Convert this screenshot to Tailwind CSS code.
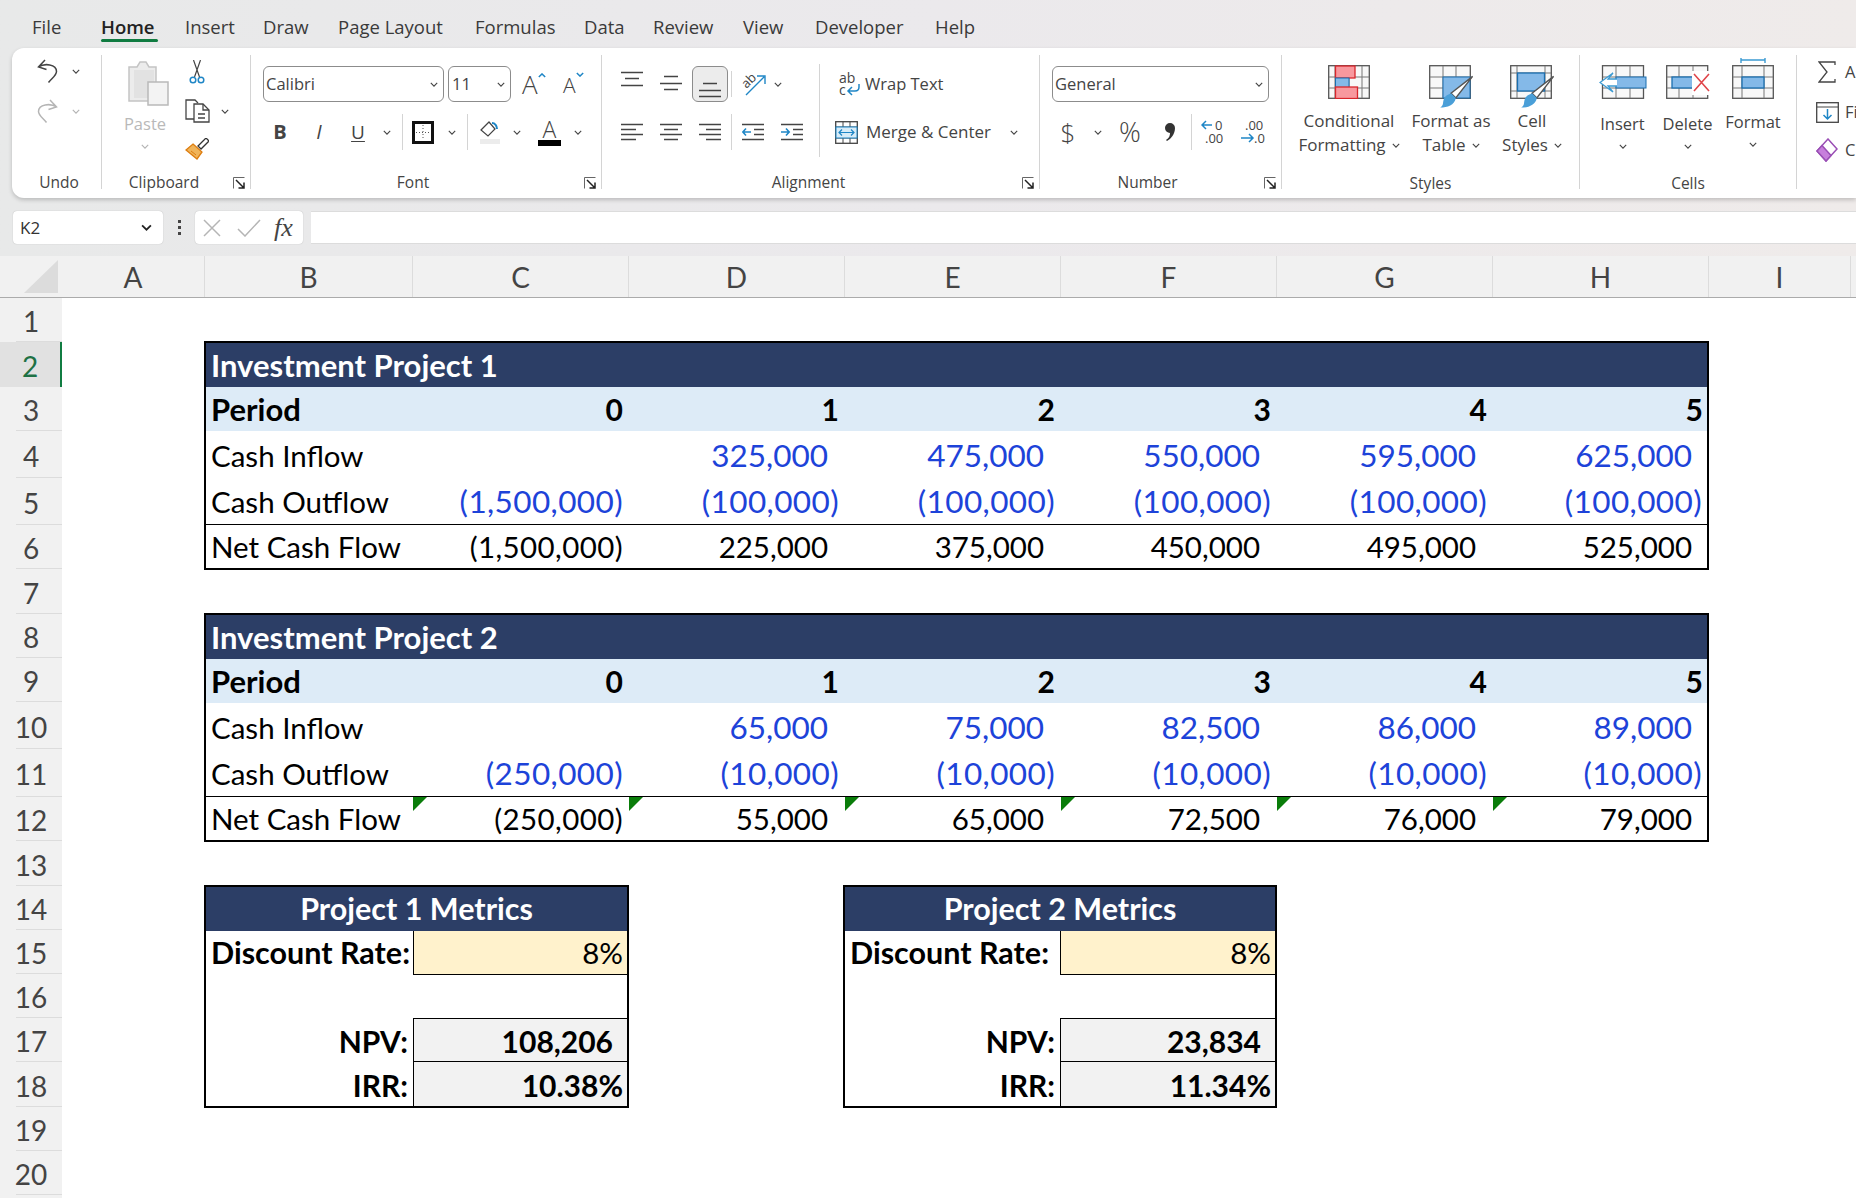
<!DOCTYPE html>
<html lang="en">
<head>
  <meta charset="UTF-8">
  <title>Excel - Investment Projects</title>
  <script src="https://cdn.jsdelivr.net/npm/@tailwindcss/browser@4"></script>
</head>
<body class="w-[1856px] h-[1198px] overflow-hidden bg-white font-['Open_Sans',sans-serif] text-[#333]">

  <svg class="hidden">
    <symbol id="chev" viewBox="0 0 10 6"><path d="M1 1l4 4 4-4" fill="none" stroke="#444" stroke-width="1.4"/></symbol>
    <symbol id="chevblue" viewBox="0 0 10 6"><path d="M1 1l4 4 4-4" fill="none" stroke="#1f86c6" stroke-width="1.8"/></symbol>
    <symbol id="launcher" viewBox="0 0 12 12"><path d="M.5 11.5V.5h11" fill="none" stroke="#666"/><path d="M3 3l8 8M11 5.5V11H5.5" fill="none" stroke="#222" stroke-width="1.5"/></symbol>
    <symbol id="brush" viewBox="0 0 30 30"><path d="M28 2L14 20l-4-4z" fill="#fff" stroke="#555" stroke-width="1.2"/><path d="M10 16l4 4c-1 6-7 8-13 8 3-2 2-4 3-7 1-3 4-4 6-5z" fill="#4a9fd8"/></symbol>
  </svg>

  <!-- top chrome -->
  <div class="h-[256px] bg-linear-to-r from-[#e8e9e9] via-[#ebe9ec] to-[#efebea]">
    <div class="h-[48px] flex items-end pb-[9px] pl-[32px] text-[18.5px] leading-[24px] text-[#3a3a3a]">
      <div class="w-[69px]">File</div>
      <div class="w-[84px] relative font-semibold text-[#222]">Home<div class="absolute left-0 top-[24px] w-[57px] h-[3px] rounded-full bg-[#107c41]"></div></div>
      <div class="w-[78px]">Insert</div>
      <div class="w-[75px]">Draw</div>
      <div class="w-[137px]">Page Layout</div>
      <div class="w-[109px]">Formulas</div>
      <div class="w-[69px]">Data</div>
      <div class="w-[90px]">Review</div>
      <div class="w-[72px]">View</div>
      <div class="w-[120px]">Developer</div>
      <div>Help</div>
    </div>

    <!-- ribbon -->
    <div class="ml-[12px] h-[150px] flex bg-white rounded-l-[12px] shadow-[0_2px_4px_rgba(0,0,0,0.2)] text-[16.5px] text-[#444] overflow-hidden">

      <!-- Undo -->
      <div class="w-[89px] shrink-0 flex flex-col pt-[11px]">
        <div class="flex items-center h-[24px] pl-[25px]">
          <svg class="w-[21px] h-[24px]" viewBox="0 0 21 24" fill="none" stroke="#444" stroke-width="1.5"><path d="M8 1L1.5 8l8 2.5M1.5 8c6-4 18-3 18 4.500 0 4-5 7-8 11"/></svg>
          <svg class="w-[8px] h-[5px] ml-[14px]"><use href="#chev"/></svg>
        </div>
        <div class="flex items-center h-[24px] pl-[25px] mt-[16px]">
          <svg class="w-[21px] h-[24px]" viewBox="0 0 21 24" fill="none" stroke="#b5b5b5" stroke-width="1.5"><path d="M13 1l6.500 7-8 2.500M19.500 8c-6-4-18-3-18 4.500 0 4 5 7 8 11"/></svg>
          <svg class="w-[8px] h-[5px] ml-[14px] opacity-40"><use href="#chev"/></svg>
        </div>
        <div class="mt-auto mb-[6px] h-[20px] leading-[20px] pl-[5px] text-center text-[15.5px]">Undo</div>
      </div>
      <div class="w-px h-[134px] shrink-0 mt-[7px] bg-[#d4d4d4]"></div>

      <!-- Clipboard -->
      <div class="w-[148px] shrink-0 relative flex flex-col">
        <div class="flex">
          <div class="w-[50px] ml-[18px] flex flex-col items-center pt-[13px]">
            <svg class="w-[41px] h-[45px] ml-[7px] shrink-0" viewBox="0 0 41 45">
              <path d="M1 6h8l3-5h6l3 5h7v34H1z" fill="#ececec" stroke="#c4c4c4" stroke-width="1.5"/>
              <rect x="6" y="9" width="20" height="28" fill="#e2e2e2"/>
              <rect x="20" y="21" width="20" height="23" fill="#f3f3f3" stroke="#b9b9b9" stroke-width="1.500"/>
            </svg>
            <div class="mt-[7px] leading-[22px] text-[#b9b9b9]">Paste</div>
            <svg class="w-[8px] h-[5px] mt-[9px] opacity-40"><use href="#chev"/></svg>
          </div>
          <div class="ml-[15px] pt-[12px] flex flex-col">
            <svg class="w-[16px] h-[24px] ml-[4px]" viewBox="0 0 16 24" fill="none"><path d="M4.500 0l6 17M11.500 0l-6 17" stroke="#444" stroke-width="1.200"/><circle cx="4" cy="20" r="2.800" stroke="#1f86c6" stroke-width="1.500"/><circle cx="12" cy="20" r="2.800" stroke="#1f86c6" stroke-width="1.500"/></svg>
            <div class="flex items-center mt-[15px] h-[24px]">
              <svg class="w-[25px] h-[24px]" viewBox="0 0 25 24" fill="none" stroke="#444" stroke-width="1.300"><path d="M10 20H1V1h9l3 3"/><path d="M9 5h9l6 6v12H9z" fill="#fff"/><path d="M18 5v6h6M13 15h7M13 19h7"/></svg>
              <svg class="w-[8px] h-[5px] ml-[11px]"><use href="#chev"/></svg>
            </div>
            <svg class="w-[24px] h-[22px] mt-[15px]" viewBox="0 0 24 22"><path d="M13 8l8-8 3 3-8 8z" fill="#fff" stroke="#333" stroke-width="1.300"/><path d="M8 6l9 8-5 7L1 12z" fill="#f0b45a" stroke="#dd7d10" stroke-width="1.300"/><path d="M6 13l5 4" stroke="#dd7d10"/></svg>
          </div>
        </div>
        <div class="mt-auto mb-[6px] h-[20px] leading-[20px] pr-[24px] text-center text-[15.5px]">Clipboard</div>
        <svg class="absolute right-[5px] bottom-[9px] w-[12px] h-[12px]"><use href="#launcher"/></svg>
      </div>
      <div class="w-px h-[134px] shrink-0 mt-[7px] bg-[#d4d4d4]"></div>

      <!-- Font -->
      <div class="w-[350px] shrink-0 relative flex flex-col pt-[18px]">
        <div class="flex items-center h-[36px] pl-[12px]">
          <div class="w-[181px] h-[36px] px-[2px] pr-[5px] flex items-center justify-between border border-[#8c8c8c] rounded-[6px]">Calibri<svg class="w-[8px] h-[5px]"><use href="#chev"/></svg></div>
          <div class="w-[63px] h-[36px] ml-[4px] px-[3px] pr-[5px] flex items-center justify-between border border-[#8c8c8c] rounded-[6px]">11<svg class="w-[8px] h-[5px]"><use href="#chev"/></svg></div>
          <div class="w-[23px] ml-[11px] flex items-start text-[26px] font-light leading-[30px]">A<svg class="w-[8px] h-[5px] mt-[4px] shrink-0 -rotate-180"><use href="#chevblue"/></svg></div>
          <div class="w-[23px] ml-[18px] flex items-start text-[21px] font-light leading-[30px] pt-[1px]">A<svg class="w-[8px] h-[5px] mt-[2px] shrink-0"><use href="#chevblue"/></svg></div>
        </div>
        <div class="flex items-center h-[36px] mt-[12px] pl-[12px]">
          <div class="w-[34px] text-center font-bold text-[20px]">B</div>
          <div class="w-[44px] text-center italic text-[20px]">I</div>
          <div class="w-[34px] text-center underline underline-offset-2 text-[19px]">U</div>
          <svg class="w-[8px] h-[5px] ml-[8px]"><use href="#chev"/></svg>
          <div class="w-px h-[36px] ml-[11px] bg-[#d4d4d4]"></div>
          <svg class="w-[22px] h-[23px] ml-[9px]" viewBox="0 0 22 23"><rect x="1.500" y="1.500" width="19" height="20" fill="none" stroke="#111" stroke-width="3"/><path d="M11 4v15M4 11.500h14" stroke="#555" stroke-dasharray="1 2"/></svg>
          <svg class="w-[8px] h-[5px] ml-[14px]"><use href="#chev"/></svg>
          <div class="w-px h-[36px] ml-[11px] bg-[#d4d4d4]"></div>
          <svg class="w-[20px] h-[24px] ml-[12px]" viewBox="0 0 20 24"><path d="M1 10l8-8 6 7-7 7z" fill="#fff" stroke="#444" stroke-width="1.200"/><path d="M12 3c3 0 5 3 5 6" fill="none" stroke="#1f86c6" stroke-width="2"/><rect x="0" y="19" width="20" height="5" fill="#ececec"/></svg>
          <svg class="w-[8px] h-[5px] ml-[13px]"><use href="#chev"/></svg>
          <div class="w-[23px] ml-[17px] flex flex-col items-center text-[23px] font-light leading-[20px]">A<div class="w-[23px] h-[6px] mt-[1px] bg-black"></div></div>
          <svg class="w-[8px] h-[5px] ml-[13px]"><use href="#chev"/></svg>
        </div>
        <div class="mt-auto mb-[6px] h-[20px] leading-[20px] pr-[26px] text-center text-[15.5px]">Font</div>
        <svg class="absolute right-[5px] bottom-[9px] w-[12px] h-[12px]"><use href="#launcher"/></svg>
      </div>
      <div class="w-px h-[134px] shrink-0 mt-[7px] bg-[#d4d4d4]"></div>

      <!-- Alignment -->
      <div class="w-[437px] shrink-0 relative flex flex-col pt-[16px]">
        <div class="flex">
          <div class="w-[217px] shrink-0 pt-[2px] flex flex-col">
            <div class="flex items-center h-[36px]">
              <svg class="w-[22px] h-[36px] ml-[19px]" viewBox="0 0 22 36" stroke="#444" stroke-width="1.300"><path d="M0 6.500h22M4 12.500h14M0 19.500h22"/></svg>
              <svg class="w-[22px] h-[36px] ml-[17px]" viewBox="0 0 22 36" stroke="#444" stroke-width="1.300"><path d="M4 10.500h14M0 17.500h22M4 23.500h14"/></svg>
              <div class="w-[36px] h-[36px] ml-[10px] flex items-center justify-center bg-[#ececec] border border-[#8c8c8c] rounded-[6px]">
                <svg class="w-[22px] h-[34px]" viewBox="0 0 22 34" stroke="#444" stroke-width="1.300"><path d="M4 16.500h14M0 23.500h22M0 29.500h22"/></svg>
              </div>
              <div class="w-px h-[26px] ml-[3px] bg-[#d4d4d4]"></div>
              <div class="relative w-[25px] h-[23px] ml-[9px]">
                <span class="absolute left-[0px] top-[1px] -rotate-45 text-[13px] leading-[13px]">ab</span>
                <svg class="absolute left-0 top-0 w-[25px] h-[23px]" viewBox="0 0 25 23"><path d="M5 22L23 4M16 3h8v8" fill="none" stroke="#1f86c6" stroke-width="1.400"/></svg>
              </div>
              <svg class="w-[8px] h-[5px] ml-[8px]"><use href="#chev"/></svg>
            </div>
            <div class="flex items-center h-[36px] mt-[12px]">
              <svg class="w-[22px] h-[20px] ml-[19px]" viewBox="0 0 22 20" stroke="#444" stroke-width="1.300"><path d="M0 2.500h22M0 7.500h15M0 12.500h22M0 17.500h15"/></svg>
              <svg class="w-[22px] h-[20px] ml-[17px]" viewBox="0 0 22 20" stroke="#444" stroke-width="1.300"><path d="M0 2.500h22M4 7.500h14M0 12.500h22M4 17.500h14"/></svg>
              <svg class="w-[22px] h-[20px] ml-[17px]" viewBox="0 0 22 20" stroke="#444" stroke-width="1.300"><path d="M0 2.500h22M7 7.500h15M0 12.500h22M7 17.500h15"/></svg>
              <div class="w-px h-[36px] ml-[10px] bg-[#d4d4d4]"></div>
              <svg class="w-[22px] h-[20px] ml-[10px]" viewBox="0 0 22 20" fill="none"><path d="M0 2.500h22M12 7.500h10M12 12.500h10M0 17.500h22" stroke="#444" stroke-width="1.300"/><path d="M9 10H1M4 6.500L.800 10 4 13.500" stroke="#1f86c6" stroke-width="1.600"/></svg>
              <svg class="w-[22px] h-[20px] ml-[17px]" viewBox="0 0 22 20" fill="none"><path d="M0 2.500h22M12 7.500h10M12 12.500h10M0 17.500h22" stroke="#444" stroke-width="1.300"/><path d="M0 10h8M5 6.500L8.200 10 5 13.500" stroke="#1f86c6" stroke-width="1.600"/></svg>
            </div>
          </div>
          <div class="w-px h-[93px] shrink-0 bg-[#d4d4d4]"></div>
          <div class="flex-1 pt-[2px] flex flex-col">
            <div class="flex items-center h-[36px] pl-[19px]">
              <div class="relative w-[21px] h-[24px] text-[14px] leading-[12px]">
                <div>ab</div><div>c</div>
                <svg class="absolute left-0 top-0 w-[21px] h-[24px]" viewBox="0 0 21 24"><path d="M20 12v3c0 3-2 4-4 4H9M13 15l-4 4 4 4" fill="none" stroke="#1f86c6" stroke-width="1.500"/></svg>
              </div>
              <span class="ml-[5px]">Wrap Text</span>
            </div>
            <div class="flex items-center h-[36px] mt-[12px] pl-[15px]">
              <svg class="w-[23px] h-[23px]" viewBox="0 0 23 23" fill="none"><rect x=".7" y=".7" width="21.600" height="21.600" stroke="#444" stroke-width="1.300"/><path d="M.7 6h21.600M.7 17h21.600M8 .7V6M15 .7V6M8 17v5.500M15 17v5.500" stroke="#444"/><rect x="1" y="6" width="21" height="11" fill="#d8ecf8" stroke="#1f86c6"/><path d="M4 11.500h15M7 8.500l-3 3 3 3M16 8.500l3 3-3 3" stroke="#1f86c6" stroke-width="1.200"/></svg>
              <span class="ml-[8px] w-[144px] text-[17px]">Merge &amp; Center</span>
              <svg class="w-[8px] h-[5px]"><use href="#chev"/></svg>
            </div>
          </div>
        </div>
        <div class="mt-auto mb-[6px] h-[20px] leading-[20px] pr-[24px] text-center text-[15.5px]">Alignment</div>
        <svg class="absolute right-[5px] bottom-[9px] w-[12px] h-[12px]"><use href="#launcher"/></svg>
      </div>
      <div class="w-px h-[134px] shrink-0 mt-[7px] bg-[#d4d4d4]"></div>

      <!-- Number -->
      <div class="w-[241px] shrink-0 relative flex flex-col pt-[18px]">
        <div class="w-[217px] h-[36px] ml-[12px] px-[2px] pr-[5px] flex items-center justify-between border border-[#8c8c8c] rounded-[6px]">General<svg class="w-[8px] h-[5px]"><use href="#chev"/></svg></div>
        <div class="flex items-center h-[36px] mt-[12px]">
          <div class="w-[16px] ml-[20px] text-center text-[26px] font-light">$</div>
          <svg class="w-[8px] h-[5px] ml-[18px]"><use href="#chev"/></svg>
          <div class="w-[26px] ml-[15px] text-center text-[27px] font-light">%</div>
          <svg class="w-[12px] h-[20px] ml-[21px]" viewBox="0 0 12 20"><path d="M6 1a5 5 0 0 1 5 5c0 6-4 11-8 13l-1-1c3-2 4-4 4-7a5 5 0 0 1 0-10z" fill="#333"/></svg>
          <div class="w-px h-[36px] ml-[15px] bg-[#d4d4d4]"></div>
          <div class="relative w-[24px] h-[26px] ml-[9px] text-[13px] leading-[13px]">
            <div class="pl-[14px]">0</div><div class="pl-[4px]">.00</div>
            <svg class="absolute left-0 top-0 w-[24px] h-[26px]" viewBox="0 0 24 26"><path d="M11 6H1M5 2L1 6l4 4" fill="none" stroke="#1f86c6" stroke-width="1.500"/></svg>
          </div>
          <div class="relative w-[24px] h-[26px] ml-[15px] text-[13px] leading-[13px]">
            <div class="pl-[5px]">.00</div><div class="pl-[14px]">.0</div>
            <svg class="absolute left-0 top-0 w-[24px] h-[26px]" viewBox="0 0 24 26"><path d="M1 19h12M9 15l4 4-4 4" fill="none" stroke="#1f86c6" stroke-width="1.500"/></svg>
          </div>
        </div>
        <div class="mt-auto mb-[6px] h-[20px] leading-[20px] pr-[26px] text-center text-[15.5px]">Number</div>
        <svg class="absolute right-[5px] bottom-[9px] w-[12px] h-[12px]"><use href="#launcher"/></svg>
      </div>
      <div class="w-px h-[134px] shrink-0 mt-[7px] bg-[#d4d4d4]"></div>

      <!-- Styles -->
      <div class="w-[297px] shrink-0 flex flex-col pt-[17px]">
        <div class="flex pl-[12px] leading-[24px] text-center text-[17px]">
          <div class="w-[110px] flex flex-col items-center">
            <div class="h-[44px] w-[42px]">
              <svg class="w-[42px] h-[34px]" viewBox="0 0 42 34"><rect x=".7" y=".7" width="40.600" height="32.600" fill="#f8f8f8" stroke="#555" stroke-width="1.300"/><path d="M7 1v32M21 1v32M34 1v32M1 12h40M1 23h40" stroke="#777"/><rect x="7.500" y="1" width="19.500" height="12" fill="#f8989e" stroke="#d8262c" stroke-width="1.300"/><rect x="7.500" y="13" width="13.500" height="10" fill="#84b9e8" stroke="#1b6fb0"/><rect x="7.500" y="22" width="22" height="11.500" fill="#f8989e" stroke="#d8262c" stroke-width="1.300"/></svg>
            </div>
            <div>Conditional</div>
            <div class="flex items-center">Formatting<svg class="w-[8px] h-[5px] ml-[6px]"><use href="#chev"/></svg></div>
          </div>
          <div class="w-[94px] flex flex-col items-center">
            <div class="h-[44px] w-[45px] relative">
              <svg class="w-[42px] h-[34px]" viewBox="0 0 42 34"><rect x=".7" y=".7" width="40.600" height="32.600" fill="#f8f8f8" stroke="#555" stroke-width="1.300"/><path d="M14 1v32M27 1v32M1 12h40M1 23h40" stroke="#777"/><rect x="14" y="12" width="27" height="21" fill="#84b9e8" stroke="#1b6fb0"/></svg>
              <svg class="absolute left-[10px] top-[9px] w-[36px] h-[36px]"><use href="#brush"/></svg>
            </div>
            <div>Format as</div>
            <div class="flex items-center">Table<svg class="w-[8px] h-[5px] ml-[6px]"><use href="#chev"/></svg></div>
          </div>
          <div class="w-[68px] flex flex-col items-center">
            <div class="h-[44px] w-[45px] relative">
              <svg class="w-[42px] h-[34px]" viewBox="0 0 42 34"><rect x=".7" y=".7" width="40.600" height="32.600" fill="#f8f8f8" stroke="#555" stroke-width="1.300"/><path d="M1 8h40M1 26h40M7 1v32M35 1v32" stroke="#777"/><rect x="7.500" y="8" width="27" height="18" fill="#84b9e8" stroke="#1b6fb0" stroke-width="1.300"/></svg>
              <svg class="absolute left-[10px] top-[9px] w-[36px] h-[36px]"><use href="#brush"/></svg>
            </div>
            <div>Cell</div>
            <div class="flex items-center">Styles<svg class="w-[8px] h-[5px] ml-[6px]"><use href="#chev"/></svg></div>
          </div>
        </div>
        <div class="mt-auto mb-[5px] h-[20px] leading-[20px] text-center text-[15.5px]">Styles</div>
      </div>
      <div class="w-px h-[134px] shrink-0 mt-[7px] bg-[#d4d4d4]"></div>

      <!-- Cells -->
      <div class="w-[216px] shrink-0 flex flex-col">
        <div class="flex pl-[10px] leading-[24px]">
          <div class="w-[65px] flex flex-col items-center pt-[17px]">
            <svg class="w-[48px] h-[34px]" viewBox="0 0 48 34"><rect x="3.500" y=".7" width="41" height="32.600" fill="#f8f8f8" stroke="#555" stroke-width="1.300"/><path d="M17 1v32M31 1v32M4 12h40M4 23h40" stroke="#777"/><rect x="17" y="12" width="30" height="11" fill="#84b9e8" stroke="#1b6fb0"/><path d="M18 14H9l5-6L1 17.500 14 27l-5-6h9" fill="#fff" stroke="#3b9ad2" stroke-width="1.300"/></svg>
            <div class="mt-[13px]">Insert</div>
            <svg class="w-[8px] h-[5px] mt-[8px]"><use href="#chev"/></svg>
          </div>
          <div class="w-[65px] flex flex-col items-center pt-[17px]">
            <svg class="w-[44px] h-[34px]" viewBox="0 0 44 34"><rect x=".7" y=".7" width="41" height="32.600" fill="#f8f8f8" stroke="#555" stroke-width="1.300"/><path d="M13 1v32M27 1v32M1 12h40M1 23h40" stroke="#777"/><rect x="6" y="12" width="21" height="11" fill="#84b9e8" stroke="#1b6fb0" stroke-width="1.300"/><rect x="26" y="6" width="18" height="24" fill="#fff"/><path d="M28 9l15 17M43 9L28 26" stroke="#e0454a" stroke-width="1.600"/></svg>
            <div class="mt-[13px]">Delete</div>
            <svg class="w-[8px] h-[5px] mt-[8px]"><use href="#chev"/></svg>
          </div>
          <div class="w-[66px] flex flex-col items-center pt-[9px]">
            <svg class="w-[42px] h-[42px]" viewBox="0 0 42 42"><path d="M9 1v5M33 1v5M9 3h24" stroke="#3b9ad2" stroke-width="1.400"/><rect x=".7" y="8.700" width="40.600" height="32.600" fill="#f8f8f8" stroke="#555" stroke-width="1.300"/><path d="M10 9v32M32 9v32M1 20h40M1 31h40" stroke="#777"/><rect x="10" y="20" width="22" height="11" fill="#84b9e8" stroke="#1b6fb0" stroke-width="1.300"/></svg>
            <div class="mt-[11px]">Format</div>
            <svg class="w-[8px] h-[5px] mt-[8px]"><use href="#chev"/></svg>
          </div>
        </div>
        <div class="mt-auto mb-[5px] h-[20px] leading-[20px] text-center text-[15.5px]">Cells</div>
      </div>
      <div class="w-px h-[134px] shrink-0 mt-[7px] bg-[#d4d4d4]"></div>

      <!-- Editing, runs off the window -->
      <div class="w-[200px] shrink-0 flex flex-col pt-[13px]">
        <div class="flex items-center h-[22px] pl-[21px]">
          <svg class="w-[18px] h-[22px]" viewBox="0 0 18 22" fill="none" stroke="#444" stroke-width="1.300"><path d="M17 4V1H1l8 10-8 10h16v-3"/></svg>
          <span class="ml-[9px]">AutoSum</span>
        </div>
        <div class="flex items-center h-[22px] pl-[19px] mt-[18px]">
          <svg class="w-[23px] h-[21px]" viewBox="0 0 23 21" fill="none"><rect x=".7" y=".7" width="21.600" height="19.600" stroke="#444" stroke-width="1.300"/><path d="M1 5h21" stroke="#444"/><path d="M11.500 7v10M7.500 13l4 4 4-4" stroke="#1f86c6" stroke-width="1.500"/></svg>
          <span class="ml-[6px]">Fill</span>
        </div>
        <div class="flex items-center h-[24px] pl-[19px] mt-[15px]">
          <svg class="w-[22px] h-[24px]" viewBox="0 0 22 24"><path d="M12 1l9 10-11 12L1 13z" fill="#fff" stroke="#9a4fb5" stroke-width="1.500"/><path d="M6 7.500l9 10L10 23 1 13z" fill="#c77fdc" stroke="#9a4fb5" stroke-width="1.500"/></svg>
          <span class="ml-[7px]">Clear</span>
        </div>
      </div>
    </div>

    <!-- formula bar -->
    <div class="mt-[13px] h-[33px] flex items-stretch">
      <div class="w-[150px] ml-[13px] pl-[7px] pr-[11px] flex items-center justify-between bg-white rounded-[4px] shadow-[0_0_1px_rgba(0,0,0,0.3)] text-[17px] text-[#333]">K2<svg class="w-[11px] h-[7px]" viewBox="0 0 10 6"><path d="M1 1l4 4 4-4" fill="none" stroke="#222" stroke-width="1.600"/></svg></div>
      <div class="w-[32px] flex flex-col items-center justify-center gap-[3px]">
        <div class="w-[3px] h-[3px] bg-[#444]"></div><div class="w-[3px] h-[3px] bg-[#444]"></div><div class="w-[3px] h-[3px] bg-[#444]"></div>
      </div>
      <div class="w-[108px] flex items-center bg-white rounded-[4px] shadow-[0_0_1px_rgba(0,0,0,0.3)]">
        <svg class="w-[18px] h-[18px] ml-[8px]" viewBox="0 0 18 18" stroke="#b5b5b5" stroke-width="1.500"><path d="M1 1l16 16M17 1L1 17"/></svg>
        <svg class="w-[24px] h-[18px] ml-[16px]" viewBox="0 0 24 18" fill="none" stroke="#b5b5b5" stroke-width="1.500"><path d="M1 10l7 7L23 1"/></svg>
        <span class="ml-[13px] font-['Liberation_Serif',serif] italic text-[26px] leading-[28px] text-[#444]">fx</span>
      </div>
      <div class="flex-1 ml-[8px] bg-white border-t border-[#dcdcdc] border-b"></div>
    </div>
  </div>

  <!-- sheet -->
  <div class="font-['Lato',sans-serif] text-black">
    <div id="colhead" class="h-[42px] flex bg-[#f1f1f1] border-b border-[#ababab]">
      <div class="w-[62px] pt-[4px] pl-[24px]"><div class="w-[34px] h-[33px] bg-[#dcdcdc] [clip-path:polygon(100%_0,100%_100%,0_100%)]"></div></div>
    </div>
    <div class="flex">
      <div id="rowhead" class="w-[62px] shrink-0 bg-[#f1f1f1]"></div>
      <div id="sheet" class="flex-1 pl-[142px] pt-[43px]"></div>
    </div>
  </div>

  <script>
    // headers
    const colWidths = [143, 208, 216, 216, 216, 216, 216, 216, 142];
    const colhead = document.getElementById('colhead');
    'ABCDEFGHI'.split('').forEach((c, i) => {
      const d = document.createElement('div');
      d.className = 'flex items-center justify-center border-r border-[#dcdcdc] text-[28px] text-[#444]';
      d.style.width = colWidths[i] + 'px';
      d.textContent = c;
      colhead.appendChild(d);
    });

    const rowHeights = [44,45,44,47,47,44,45,44,44,47,48,44,45,44,44,44,44,45,44,44,20];
    const rowhead = document.getElementById('rowhead');
    rowHeights.forEach((h, i) => {
      const d = document.createElement('div');
      // row lines stop short of the window edge
      d.className = i === 1
        ? 'flex items-center justify-center pt-[2px] bg-[#e1e1e1] border-r-2 border-[#107c41] text-[28px] text-[#1e7145]'
        : 'relative flex items-center justify-center pt-[2px] text-[28px] text-[#444] after:absolute after:left-[16px] after:right-0 after:bottom-0 after:h-px after:bg-[#dcdcdc]';
      d.style.height = h + 'px';
      if (i < 20) d.textContent = i + 1;
      rowhead.appendChild(d);
    });

    // the two cash flow tables
    const title = 'col-span-7 bg-[#2c3e66] text-white font-bold text-[31px] flex items-center pl-[5px]';
    const period = 'bg-[#ddebf7] font-bold flex items-center justify-end';
    const label = 'flex items-center pl-[5px] text-[29.5px]';
    const blue = 'flex items-center justify-end pt-[2px] text-[31.5px] text-[#1d43d9]';
    const black = 'relative flex items-center justify-end pt-[2px] border-t border-black text-[29.5px]';
    const cell = (cls, text) => `<div class="${cls}">${text}</div>`;
    const tri = '<div class="absolute left-0 top-0 w-[14px] h-[14px] bg-[#0a7d0a] [clip-path:polygon(0_0,100%_0,0_100%)]"></div>';

    // bracketed figures sit nearer the cell edge, last column is 2px narrower
    function money(cls, v, last, flag) {
      const paren = v[0] === '(';
      const pad = paren ? (last ? 'pr-[5px] tracking-[0.4px]' : 'pr-[6px] tracking-[0.4px]') : (last ? 'pr-[15px]' : 'pr-[17px]');
      return cell(cls + ' ' + pad, (flag ? tri : '') + v);
    }

    function cashTable(name, inflow, outflow, net, flagged) {
      let h = `<div class="w-[1505px] mb-[43px] grid grid-cols-[207px_repeat(5,216px)_214px] grid-rows-[44px_44px_47px_46px_44px] border-2 border-black">`;
      h += cell(title, name);
      h += cell(period + ' justify-start pl-[5px] text-[31px]', 'Period');
      for (let i = 0; i < 6; i++) h += cell(period + (i === 5 ? ' pr-[4px]' : ' pr-[6px]') + ' text-[30px]', i);
      h += cell(label + ' pt-[3px]', 'Cash Inflow') + '<div></div>';
      inflow.forEach((v, i) => h += money(blue, v, i === 4));
      h += cell(label + ' pt-[3px]', 'Cash Outflow');
      outflow.forEach((v, i) => h += money(blue, v, i === 5));
      h += cell(label + ' pt-[2px] border-t border-black', 'Net Cash Flow');
      net.forEach((v, i) => h += money(black, v, i === 5, flagged));
      return h + '</div>';
    }

    function metrics(name, cols, rate, npv, irr, extra) {
      const lab = 'flex items-center justify-end pt-[2px] font-bold text-[30px] pr-[5px]';
      const val = 'flex items-center justify-end pt-[2px] font-bold text-[30px] bg-[#f2f2f2] border-l border-black';
      return `<div class="${cols} ${extra} grid grid-rows-[44px_44px_43px_44px_44px] border-2 border-black">`
        + cell('col-span-2 bg-[#2c3e66] text-white font-bold text-[30.5px] flex items-center justify-center', name)
        + cell('flex items-center pl-[5px] font-bold text-[30.5px] whitespace-nowrap', 'Discount Rate:')
        + cell('flex items-center justify-end pt-[1px] text-[29.5px] pr-[4px] bg-[#fff2cc] border-l border-b border-black', rate)
        + '<div class="col-span-2"></div>'
        + cell(lab, 'NPV:') + cell(val + ' border-t border-b pr-[14px]', npv)
        + cell(lab, 'IRR:') + cell(val + ' pr-[4px]', irr)
        + '</div>';
    }

    document.getElementById('sheet').innerHTML =
      cashTable('Investment Project 1',
        ['325,000','475,000','550,000','595,000','625,000'],
        ['(1,500,000)','(100,000)','(100,000)','(100,000)','(100,000)','(100,000)'],
        ['(1,500,000)','225,000','375,000','450,000','495,000','525,000'], false) +
      cashTable('Investment Project 2',
        ['65,000','75,000','82,500','86,000','89,000'],
        ['(250,000)','(10,000)','(10,000)','(10,000)','(10,000)','(10,000)'],
        ['(250,000)','55,000','65,000','72,500','76,000','79,000'], true) +
      '<div class="flex">' +
        metrics('Project 1 Metrics', 'grid-cols-[207px_214px]', '8%', '108,206', '10.38%', 'w-[425px]') +
        metrics('Project 2 Metrics', 'grid-cols-[215px_215px]', '8%', '23,834', '11.34%', 'w-[434px] ml-[214px]') +
      '</div>';
  </script>
</body>
</html>
